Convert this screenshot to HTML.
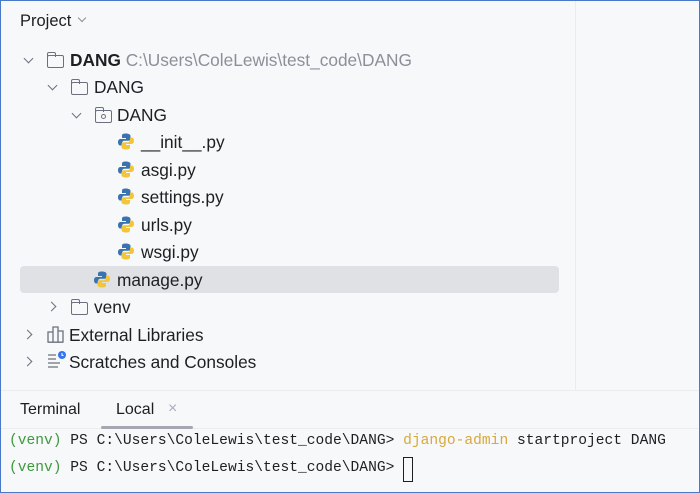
<!DOCTYPE html>
<html><head><style>
*{margin:0;padding:0;box-sizing:border-box}
body{width:700px;height:493px;overflow:hidden;background:#f7f8fa;font-family:"Liberation Sans",sans-serif;position:relative}
.frame{position:absolute;left:0;top:0;width:700px;height:493px;border:1.5px solid #4a78c8;pointer-events:none;z-index:9}
.vl{position:absolute;left:575px;top:0;width:1px;height:390px;background:#ebecf0}
.hl{position:absolute;left:0;top:390px;width:700px;height:1px;background:#ebecf0}
.t{position:absolute;font-size:17.3px;color:#1e1f22;white-space:nowrap;line-height:20px}
.sel{position:absolute;left:20px;top:266px;width:539px;height:27px;background:#dfe1e5;border-radius:4px}
.chev{position:absolute;width:7px;height:7px;border-right:1.4px solid #6c707e;border-bottom:1.4px solid #6c707e}
.d{transform:rotate(45deg)}
.r{transform:rotate(-45deg)}
.fold{position:absolute;width:17px;height:13px;border:1.3px solid #6c707e;border-radius:2px}
.fold:before{content:"";position:absolute;left:-1.3px;top:-4px;width:7px;height:4px;border:1.3px solid #6c707e;border-bottom:none;border-radius:2px 2px 0 0}
.mono{position:absolute;font-family:"Liberation Mono",monospace;font-size:14.6px;color:#1e1f22;white-space:pre;left:9px}
.g{color:#3c9a3c}.y{color:#d9a83a}
svg{position:absolute}
</style></head><body>
<div class="frame"></div>
<div class="vl"></div><div class="hl"></div>
<div class="t" style="left:20px;top:11px;font-size:16.5px">Project</div>
<div class="chev d" style="left:79px;top:15px;width:6px;height:6px;border-color:#8c8f99"></div>
<div class="sel"></div>
<div class="chev d" style="left:25px;top:55px"></div>
<div class="fold" style="left:47px;top:55px"></div>
<div class="t" style="left:70px;top:50px;font-weight:bold">DANG <span style="font-weight:normal;color:#8c8f99">C:\Users\ColeLewis\test_code\DANG</span></div>
<div class="chev d" style="left:49px;top:82px"></div>
<div class="fold" style="left:71px;top:82px"></div>
<div class="t" style="left:94px;top:77px">DANG</div>
<div class="chev d" style="left:73px;top:110px"></div>
<div class="fold" style="left:95px;top:110px"><div style="position:absolute;left:4.5px;top:3px;width:5px;height:5px;border:1.2px solid #6c707e;border-radius:50%"></div></div>
<div class="t" style="left:117px;top:105px">DANG</div>
<svg width="0" height="0"><defs><g id="py"><path d="M7.5 0.5c-3.5 0-3.5 1.5-3.5 2.5v2h4v1H2.5C1 6 0 7.2 0 9.2s1 3.3 2.5 3.3H4v-2.2c0-1.5 1.2-2.5 2.5-2.5h4c1.2 0 2-1 2-2V3c0-1.2-1-2.5-5-2.5z" fill="#3a74b0"/><path d="M8.5 16.5c3.5 0 3.5-1.5 3.5-2.5v-2H8v-1h5.5c1.5 0 2.5-1.2 2.5-3.2s-1-3.3-2.5-3.3H12v2.2c0 1.5-1.2 2.5-2.5 2.5h-4c-1.2 0-2 1-2 2V14c0 1.200 1 2.5 5 2.5z" fill="#f3c53b"/></g></defs></svg>
<svg style="left:118px;top:133px" width="17" height="17"><use href="#py"/></svg>
<div class="t" style="left:141px;top:132px">__init__.py</div>
<svg style="left:118px;top:161px" width="17" height="17"><use href="#py"/></svg>
<div class="t" style="left:141px;top:160px">asgi.py</div>
<svg style="left:118px;top:188px" width="17" height="17"><use href="#py"/></svg>
<div class="t" style="left:141px;top:187px">settings.py</div>
<svg style="left:118px;top:216px" width="17" height="17"><use href="#py"/></svg>
<div class="t" style="left:141px;top:215px">urls.py</div>
<svg style="left:118px;top:243px" width="17" height="17"><use href="#py"/></svg>
<div class="t" style="left:141px;top:242px">wsgi.py</div>
<svg style="left:94px;top:271px" width="17" height="17"><use href="#py"/></svg>
<div class="t" style="left:117px;top:270px">manage.py</div>
<div class="chev r" style="left:48px;top:303px"></div>
<div class="fold" style="left:71px;top:302px"></div>
<div class="t" style="left:94px;top:297px">venv</div>
<div class="chev r" style="left:24px;top:331px"></div>
<svg style="left:47px;top:326px" width="18" height="17"><path d="M1 16V6h5v10M6 16V1h5v15M11 16V5h5v11M0.5 16.2h16" fill="none" stroke="#6c707e" stroke-width="1.3"/></svg>
<div class="t" style="left:69px;top:325px">External Libraries</div>
<div class="chev r" style="left:24px;top:358px"></div>
<svg style="left:47px;top:350px" width="20" height="20"><path d="M1 5h8M1 9h8M1 13h12M1 17h10" stroke="#6c707e" stroke-width="1.3"/><circle cx="15" cy="5" r="4" fill="#3574f0"/><path d="M15 3v2.5h1.5" stroke="#fff" stroke-width="1" fill="none"/></svg>
<div class="t" style="left:69px;top:352px">Scratches and Consoles</div>
<div class="t" style="left:20px;top:400px;font-size:16px">Terminal</div>
<div class="t" style="left:116px;top:400px;font-size:16px">Local</div>
<div class="t" style="left:168px;top:399px;font-size:16px;color:#a8adbd">×</div>
<div style="position:absolute;left:0;top:428px;width:698px;height:1px;background:#ebecf0"></div>
<div style="position:absolute;left:101px;top:426px;width:92px;height:3px;background:#a5a8b0;border-radius:2px"></div>
<div class="mono" style="top:433px"><span class="g">(venv)</span> PS C:\Users\ColeLewis\test_code\DANG&gt; <span class="y">django-admin</span> startproject DANG</div>
<div class="mono" style="top:460px"><span class="g">(venv)</span> PS C:\Users\ColeLewis\test_code\DANG&gt; </div>
<div style="position:absolute;left:403px;top:457px;width:10px;height:25px;border:1.5px solid #1e1f22"></div>
</body></html>
